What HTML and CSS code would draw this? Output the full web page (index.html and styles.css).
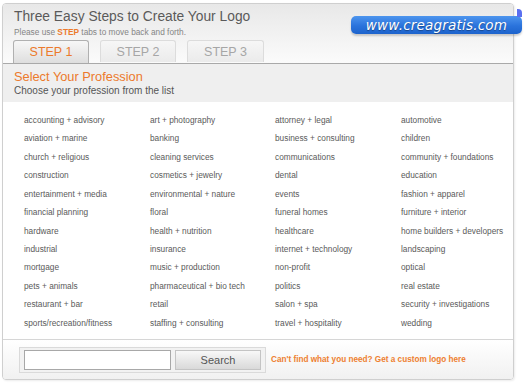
FILE: index.html
```html
<!DOCTYPE html>
<html>
<head>
<meta charset="utf-8">
<link rel="stylesheet" href="styles.css">
</head>
<body>
<div class="frame">
  <div class="header">
    <div class="title">Three Easy Steps to Create Your Logo</div>
    <div class="subtitle">Please use <b>STEP</b> tabs to move back and forth.</div>
    <div class="tabs">
      <div class="tab active">STEP 1</div>
      <div class="tab">STEP 2</div>
      <div class="tab wide">STEP 3</div>
    </div>
  </div>
  <div class="band">
    <div class="band-title">Select Your Profession</div>
    <div class="band-sub">Choose your profession from the list</div>
  </div>
  <div class="list">
    <span>accounting + advisory</span><span>art + photography</span><span>attorney + legal</span><span>automotive</span>
    <span>aviation + marine</span><span>banking</span><span>business + consulting</span><span>children</span>
    <span>church + religious</span><span>cleaning services</span><span>communications</span><span>community + foundations</span>
    <span>construction</span><span>cosmetics + jewelry</span><span>dental</span><span>education</span>
    <span>entertainment + media</span><span>environmental + nature</span><span>events</span><span>fashion + apparel</span>
    <span>financial planning</span><span>floral</span><span>funeral homes</span><span>furniture + interior</span>
    <span>hardware</span><span>health + nutrition</span><span>healthcare</span><span>home builders + developers</span>
    <span>industrial</span><span>insurance</span><span>internet + technology</span><span>landscaping</span>
    <span>mortgage</span><span>music + production</span><span>non-profit</span><span>optical</span>
    <span>pets + animals</span><span>pharmaceutical + bio tech</span><span>politics</span><span>real estate</span>
    <span>restaurant + bar</span><span>retail</span><span>salon + spa</span><span>security + investigations</span>
    <span>sports/recreation/fitness</span><span>staffing + consulting</span><span>travel + hospitality</span><span>wedding</span>
  </div>
  <div class="footer">
    <div class="searchbox">
      <input class="search-input" type="text">
      <button class="search-btn">Search</button>
    </div>
    <a class="custom">Can't find what you need? Get a custom logo here</a>
  </div>
</div>
<div class="badge"><span class="badge-text">www.creagratis.com</span></div>
<div class="badge-fold"></div>
</body>
</html>
```
FILE: styles.css
```css
html, body {
  margin: 0;
  padding: 0;
  background: #ffffff;
}
body {
  font-family: "Liberation Sans", Arial, sans-serif;
  color: #555;
  position: relative;
  width: 530px;
  height: 383px;
  overflow: hidden;
}
.frame {
  margin: 3px 0 0 2px;
  width: 510px;
  height: 375px;
  border: 1px solid #cfcfcf;
  border-radius: 4px;
  overflow: hidden;
  display: flex;
  flex-direction: column;
  box-shadow: 1px 1px 2px rgba(0,0,0,0.08);
}
.header {
  background: linear-gradient(#e8e8e8, #fbfbfb);
  border-bottom: 1px solid #a9a9a9;
  height: 60px;
  box-sizing: border-box;
  padding-top: 5px;
  display: flex;
  flex-direction: column;
}
.title {
  font-size: 13.8px;
  line-height: 16px;
  color: #5a5a5a;
  padding-left: 11px;
}
.subtitle {
  font-size: 8.3px;
  line-height: 10px;
  color: #858585;
  padding-left: 11px;
  margin-top: 2px;
}
.subtitle b {
  color: #ec7a2c;
}
.tabs {
  display: flex;
  gap: 11px;
  margin-top: auto;
  padding-left: 10px;
}
.tab {
  width: 76px;
  height: 22px;
  box-sizing: border-box;
  border: 1px solid #dcdcdc;
  border-bottom: none;
  border-radius: 3px 3px 0 0;
  background: linear-gradient(#f6f6f6, #ebebeb);
  font-size: 12.5px;
  line-height: 22px;
  text-align: center;
  color: #a6a6a6;
}
.tab.wide {
  width: 77px;
}
.tab.active {
  height: 23px;
  border-color: #b0b0b0;
  background: linear-gradient(#f7f7f7, #dedede);
  color: #ec7a2c;
  line-height: 23px;
}
.band {
  background: #efefef;
  height: 38px;
  box-sizing: border-box;
  padding: 5px 0 0 11px;
}
.band-title {
  font-size: 12.8px;
  line-height: 16px;
  color: #ec7a2c;
}
.band-sub {
  font-size: 10px;
  line-height: 12px;
  color: #555;
}
.list {
  background: #ffffff;
  height: 238px;
  box-sizing: border-box;
  border-bottom: 1px solid #d6d6d6;
  padding: 9px 0 0 21px;
  display: grid;
  grid-template-columns: 126px 125px 126px 110px;
  grid-auto-rows: 18.43px;
  font-size: 8.3px;
  line-height: 18.43px;
  color: #5a5a5a;
}
.list span {
  white-space: nowrap;
}
.footer {
  flex: 1;
  background: linear-gradient(#ffffff, #f1f1f1);
  display: flex;
  align-items: center;
  padding-left: 16px;
  gap: 5px;
}
.searchbox {
  width: 247px;
  height: 26px;
  box-sizing: border-box;
  border: 1px solid #dadada;
  background: #f2f2f2;
  display: flex;
  align-items: center;
  padding-left: 4px;
  gap: 4px;
  margin-top: 1px;
}
.search-input {
  width: 147px;
  height: 20px;
  box-sizing: border-box;
  border: 1px solid #a8a8a8;
  background: #fff;
  margin: 0;
  padding: 0;
}
.search-btn {
  width: 86px;
  height: 20px;
  box-sizing: border-box;
  border: 1px solid #c4c4c4;
  background: linear-gradient(#f8f8f8, #d9d9d9);
  font-family: "Liberation Sans", Arial, sans-serif;
  font-size: 11px;
  color: #555;
  margin: 0;
  padding: 0;
}
.custom {
  font-size: 8.2px;
  font-weight: bold;
  color: #ee7f30;
  white-space: nowrap;
}
.badge {
  position: absolute;
  left: 351px;
  top: 16px;
  width: 171px;
  height: 18px;
  border-radius: 5px;
  background: linear-gradient(#4d95ee, #2a73dc 55%, #1d63cc);
  box-shadow: 0 2px 2px rgba(0,0,0,0.18);
  display: flex;
  align-items: center;
  justify-content: center;
}
.badge-text {
  font-family: "DejaVu Sans", Verdana, sans-serif;
  font-style: italic;
  font-size: 13.5px;
  color: #ffffff;
  letter-spacing: 0.2px;
  text-shadow: 0 1px 1px rgba(0,0,0,0.35);
}
.badge-fold {
  position: absolute;
  left: 517px;
  top: 9px;
  width: 5px;
  height: 8px;
  background: #5a6ff0;
  border-radius: 0 4px 0 0;
}
```
